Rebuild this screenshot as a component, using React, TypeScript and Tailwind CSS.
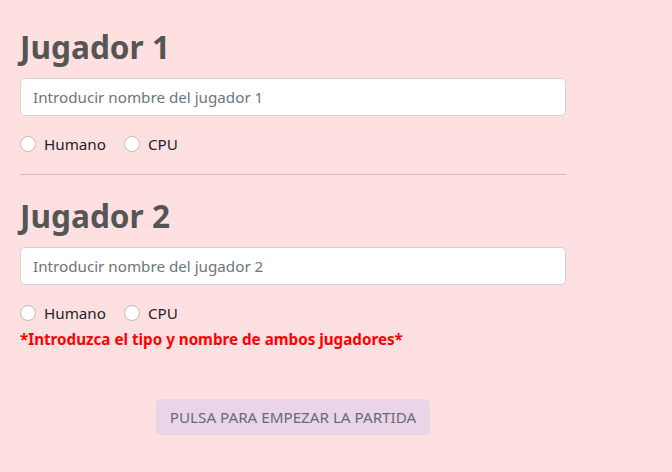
import { useState } from 'react';

type Tipo = 'humano' | 'cpu' | '';

function JugadorForm({ n, nombre, setNombre, tipo, setTipo }: {
  n: number;
  nombre: string;
  setNombre: (v: string) => void;
  tipo: Tipo;
  setTipo: (v: Tipo) => void;
}) {
  return (
    <div>
      <h2 className="text-[31.6px] font-bold leading-[38px] text-[#555555] mb-3">Jugador {n}</h2>
      <input
        type="text"
        value={nombre}
        onChange={(e) => setNombre(e.target.value)}
        placeholder={`Introducir nombre del jugador ${n}`}
        className="block w-full h-[38px] rounded-[5px] border border-[#ced4da] bg-white px-3 text-[15.2px] text-[#495057] placeholder:text-[#6c757d] focus:outline-none"
      />
      <div className="mt-4 flex items-center gap-[18px] text-[15.2px] text-[#212529] leading-6">
        {(['humano', 'cpu'] as const).map((t) => (
          <label key={t} className="flex items-center gap-2 cursor-pointer">
            <input
              type="radio"
              name={`tipo${n}`}
              checked={tipo === t}
              onChange={() => setTipo(t)}
              className="appearance-none w-4 h-4 rounded-full border border-[#bdbdbd] bg-white checked:border-[5px] checked:border-[#0d6efd]"
            />
            {t === 'humano' ? 'Humano' : 'CPU'}
          </label>
        ))}
      </div>
    </div>
  );
}

export default function App() {
  const [n1, setN1] = useState('');
  const [n2, setN2] = useState('');
  const [t1, setT1] = useState<Tipo>('');
  const [t2, setT2] = useState<Tipo>('');
  const listo = n1.trim() && n2.trim() && t1 && t2;

  return (
    <div className="min-h-screen bg-[#ffe0e1] font-['Noto_Sans','Open_Sans',sans-serif]">
      <div className="w-[546px] ml-5 pt-[28px]">
        <JugadorForm n={1} nombre={n1} setNombre={setN1} tipo={t1} setTipo={setT1} />
        <hr className="mt-[18px] mb-[22px] border-t border-[#d3b8ba]" />
        <JugadorForm n={2} nombre={n2} setNombre={setN2} tipo={t2} setTipo={setT2} />
        {!listo && (
          <p className="mt-[2px] text-[15.2px] font-bold text-[#ff0000] leading-6">
            *Introduzca el tipo y nombre de ambos jugadores*
          </p>
        )}
        <div className="mt-12 flex justify-center">
          <button
            type="button"
            disabled={!listo}
            className="h-9 rounded-[5px] bg-[#e9d5e7] px-[14px] text-[15.2px] uppercase text-[#656b7a]"
          >
            Pulsa para empezar la partida
          </button>
        </div>
      </div>
    </div>
  );
}
